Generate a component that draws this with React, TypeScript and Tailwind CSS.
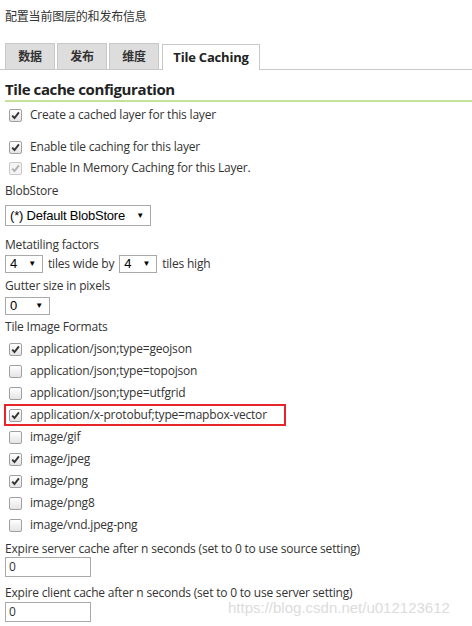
const formats = [
  { label: 'application/json;type=geojson', checked: true },
  { label: 'application/json;type=topojson', checked: false },
  { label: 'application/json;type=utfgrid', checked: false },
  { label: 'application/x-protobuf;type=mapbox-vector', checked: true, marked: true },
  { label: 'image/gif', checked: false },
  { label: 'image/jpeg', checked: true },
  { label: 'image/png', checked: true },
  { label: 'image/png8', checked: false },
  { label: 'image/vnd.jpeg-png', checked: false },
];

function Box({ checked, disabled }: { checked: boolean; disabled?: boolean }) {
  return (
    <span
      className={`inline-flex h-[13px] w-[13px] shrink-0 items-center justify-center rounded-[2px] border ${
        disabled ? 'border-[#c8c8c8] bg-[#f4f4f4]' : 'border-[#a0a0a0] bg-gradient-to-b from-[#ffffff] to-[#e4e4e4]'
      }`}
    >
      {checked && (
        <svg width="9" height="9" viewBox="0 0 9 9">
          <path
            d="M1.2 4.6 L3.5 7 L7.9 1.4"
            fill="none"
            stroke={disabled ? '#b0b0b0' : '#333'}
            strokeWidth="1.9"
          />
        </svg>
      )}
    </span>
  );
}

function Select({ value, className }: { value: string; className: string }) {
  return (
    <span
      className={`inline-flex items-center justify-between border border-[#a9a9a9] bg-white pl-[4px] pr-[6px] font-['Liberation_Sans',sans-serif] text-[13px] text-black ${className}`}
    >
      {value}
      <span className="text-[8px] leading-none">▼</span>
    </span>
  );
}

export default function App() {
  return (
    <div className="relative h-[626px] w-[472px] overflow-hidden bg-white font-['Open_Sans','Noto_Sans_CJK_SC',sans-serif] text-[12px] tracking-[-0.2px] text-[#333]">
      <p className="pl-[5px] pt-[9px] leading-[16px]">配置当前图层的和发布信息</p>

      <div className="mt-[18px] flex items-end border-b border-[#c8c8c8] pl-[5px]">
        {['数据', '发布', '维度'].map((t) => (
          <span
            key={t}
            className="mr-[2px] flex h-[26px] w-[50px] items-center justify-center border border-b-0 border-[#c8c8c8] bg-[#dddddd] font-bold"
          >
            {t}
          </span>
        ))}
        <span className="-mb-px ml-px flex h-[26px] w-[98px] items-center justify-center border border-b-0 border-[#c8c8c8] bg-white text-[13px] font-bold text-[#222]">
          Tile Caching
        </span>
      </div>

      <h2 className="ml-[5px] mt-[9px] border-b-2 border-[#c5e29a] text-[15px] font-bold leading-[21px] tracking-[-0.4px] text-[#222]">
        Tile cache configuration
      </h2>

      <div className="flex items-center gap-[8px] pl-[9px] pt-[4px] leading-[18px]">
        <Box checked />
        <span>Create a cached layer for this layer</span>
      </div>

      <div className="flex items-center gap-[8px] pl-[9px] pt-[14px] leading-[18px]">
        <Box checked />
        <span>Enable tile caching for this layer</span>
      </div>
      <div className="flex items-center gap-[8px] pl-[9px] pt-[3px] leading-[18px]">
        <Box checked disabled />
        <span>Enable In Memory Caching for this Layer.</span>
      </div>

      <p className="pl-[5px] pt-[5px] leading-[18px]">BlobStore</p>
      <div className="flex pl-[5px] pt-[5px]">
        <Select value="(*) Default BlobStore" className="h-[21px] w-[146px]" />
      </div>

      <p className="pl-[5px] pt-[10px] leading-[18px]">Metatiling factors</p>
      <div className="flex items-center gap-[5px] pl-[5px] pt-[1px]">
        <Select value="4" className="h-[18px] w-[38px]" />
        <span>tiles wide by</span>
        <Select value="4" className="h-[18px] w-[38px]" />
        <span>tiles high</span>
      </div>

      <p className="pl-[5px] pt-[4px] leading-[18px]">Gutter size in pixels</p>
      <div className="flex pl-[5px] pt-[2px]">
        <Select value="0" className="h-[18px] w-[45px]" />
      </div>

      <p className="pl-[5px] pt-[3px] leading-[18px]">Tile Image Formats</p>
      <div className="flex flex-col pt-[2px]">
        {formats.map((f) => (
          <div key={f.label} className="relative flex h-[22px] items-center gap-[8px] pl-[9px]">
            <Box checked={f.checked} />
            <span>{f.label}</span>
            {f.marked && (
              <span className="absolute left-[4px] top-0 h-[22px] w-[282px] border-2 border-[#e8262a]" />
            )}
          </div>
        ))}
      </div>

      <p className="pl-[5px] pt-[5px] leading-[16px]">Expire server cache after n seconds (set to 0 to use source setting)</p>
      <div className="pl-[5px]">
        <div className="flex h-[20px] w-[86px] items-center border border-[#a9a9a9] pl-[3px]">0</div>
      </div>
      <p className="pl-[5px] pt-[8px] leading-[16px]">Expire client cache after n seconds (set to 0 to use server setting)</p>
      <div className="pl-[5px] pt-[1px]">
        <div className="flex h-[20px] w-[86px] items-center border border-[#a9a9a9] pl-[3px]">0</div>
      </div>

      <span className="absolute left-[228px] top-[597px] font-['Liberation_Sans',sans-serif] text-[15px] tracking-normal text-[#dcdcdc]">
        https://blog.csdn.net/u012123612
      </span>
    </div>
  );
}
